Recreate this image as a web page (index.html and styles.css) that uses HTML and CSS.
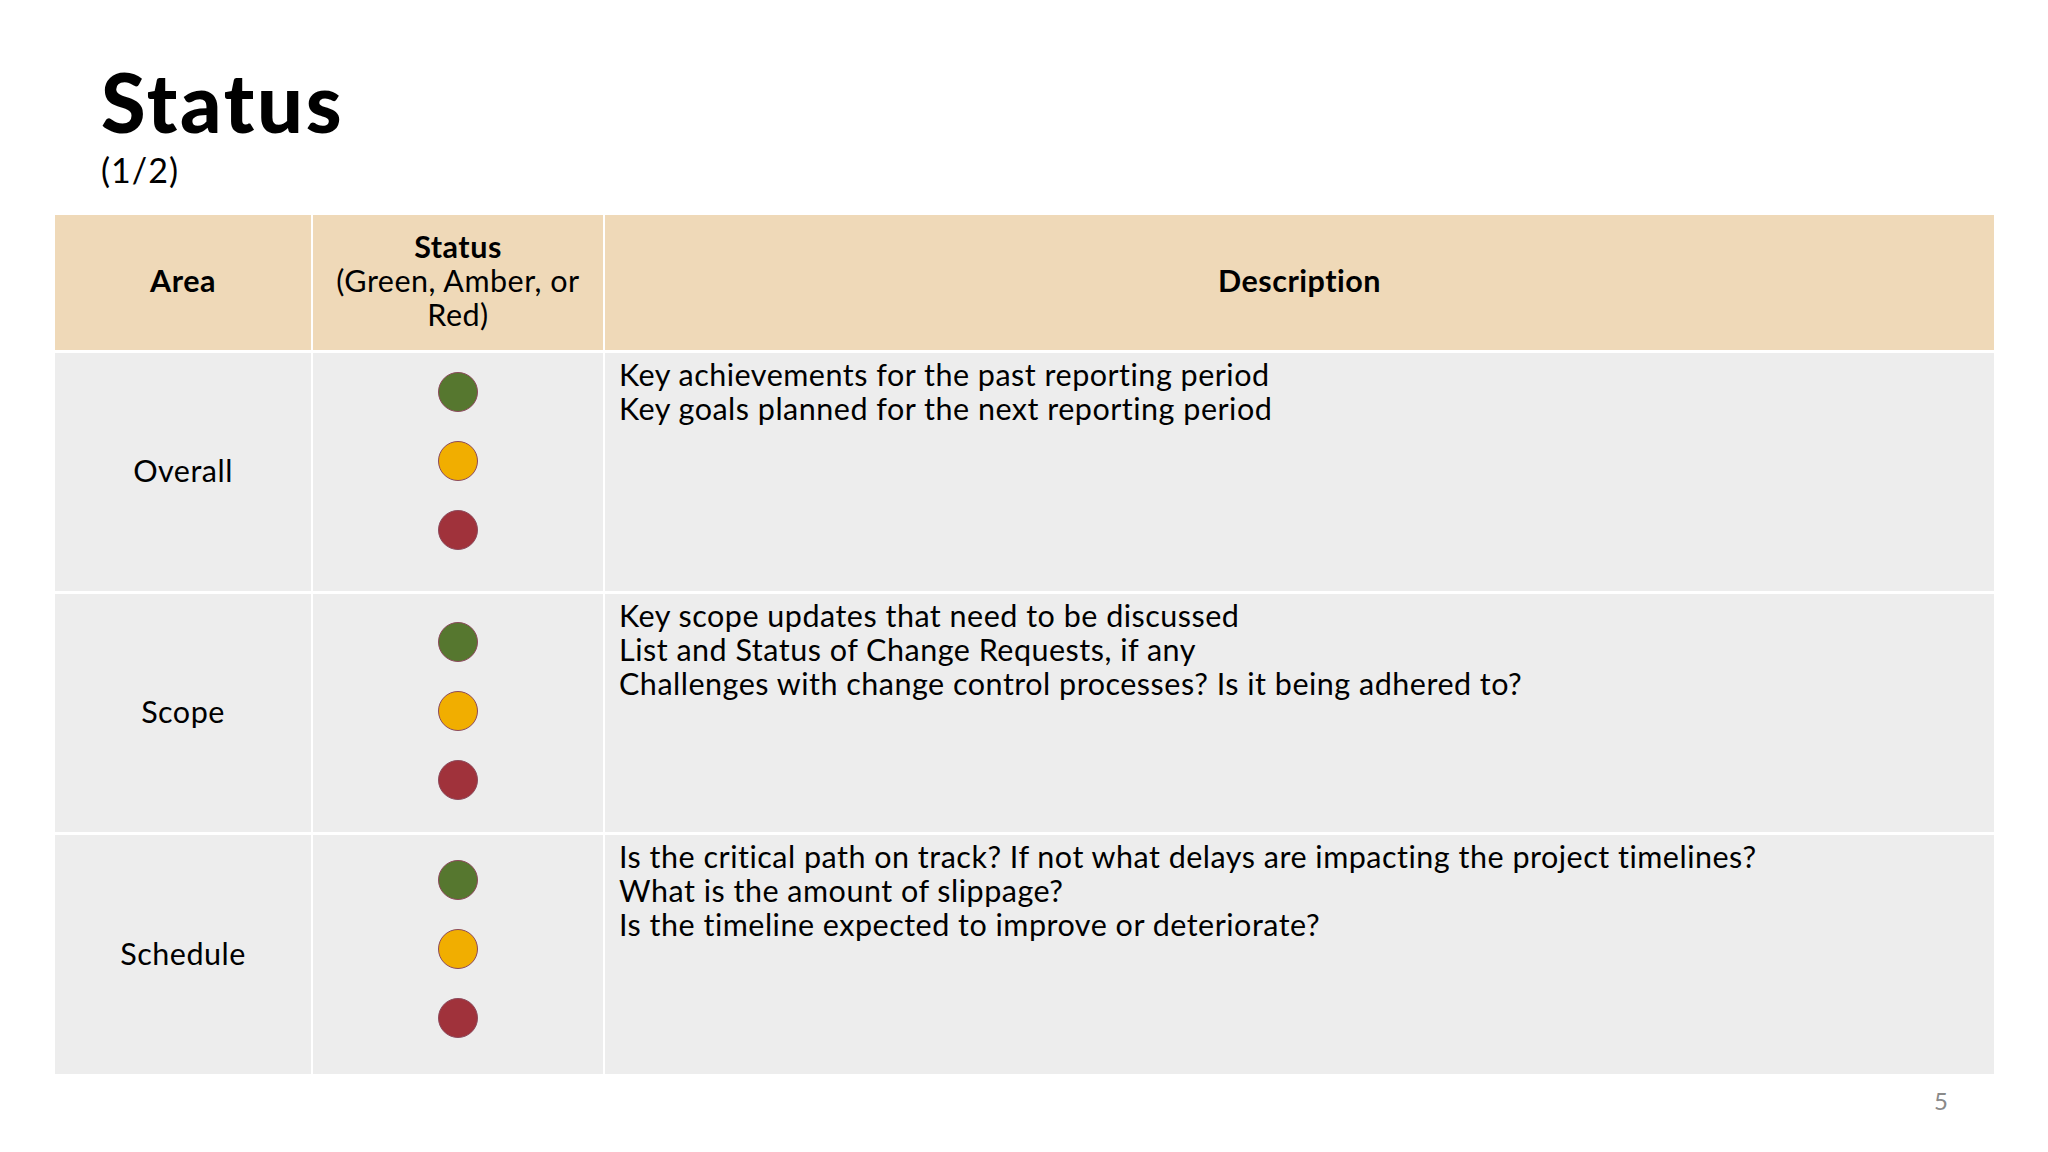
FILE: index.html
```html
<!DOCTYPE html>
<html lang="en">
<head>
<meta charset="utf-8">
<title>Status (1/2)</title>
<link rel="stylesheet" href="styles.css">
</head>
<body>
<main class="slide">
  <header class="slide-head">
    <h1 class="title">Status</h1>
    <p class="subtitle">(1/2)</p>
  </header>

  <section class="table">
    <div class="cell head">Area</div>
    <div class="cell head"><span class="strong">Status</span><span class="light">(Green, Amber, or<br>Red)</span></div>
    <div class="cell head">Description</div>

    <div class="cell area">Overall</div>
    <div class="cell lights"><span class="dot green"></span><span class="dot amber"></span><span class="dot red"></span></div>
    <div class="cell desc">Key achievements for the past reporting period<br>Key goals planned for the next reporting period</div>

    <div class="cell area">Scope</div>
    <div class="cell lights lower"><span class="dot green"></span><span class="dot amber"></span><span class="dot red"></span></div>
    <div class="cell desc">Key scope updates that need to be discussed<br>List and Status of Change Requests, if any<br>Challenges with change control processes? Is it being adhered to?</div>

    <div class="cell area">Schedule</div>
    <div class="cell lights lowest"><span class="dot green"></span><span class="dot amber"></span><span class="dot red"></span></div>
    <div class="cell desc">Is the critical path on track? If not what delays are impacting the project timelines?<br>What is the amount of slippage?<br>Is the timeline expected to improve or deteriorate?</div>
  </section>

  <footer class="page-num">5</footer>
</main>
</body>
</html>
```

FILE: styles.css
```css
* { box-sizing: border-box; }
html, body { margin: 0; padding: 0; background: #ffffff; }
body {
  font-family: Lato, "Open Sans", "Liberation Sans", sans-serif;
  color: #000;
  width: 2048px;
  height: 1152px;
  overflow: hidden;
}
.slide {
  position: relative;
  width: 2048px;
  height: 1152px;
  padding: 61px 54px 0 55px;
}
.slide-head { padding-left: 46px; }
.title {
  margin: 0;
  font-size: 81px;
  line-height: 81px;
  font-weight: 900;
  letter-spacing: 2.8px;
}
.subtitle {
  margin: 11px 0 0 0;
  font-size: 34px;
  line-height: 34px;
  font-weight: 400;
  letter-spacing: 1px;
}
.table {
  margin-top: 28px;
  display: grid;
  grid-template-columns: 256px 290px 1fr;
  grid-template-rows: 135px 238px 238px 239px;
  column-gap: 2px;
  row-gap: 3px;
  background: #ffffff;
}
.cell {
  background: #ededed;
  font-size: 30.5px;
  line-height: 34px;
  letter-spacing: 0.5px;
}
.head {
  background: #efd9b8;
  font-weight: 700;
  display: flex;
  flex-direction: column;
  align-items: center;
  justify-content: center;
  text-align: center;
  padding-bottom: 5px;
}
.head .light { font-weight: 400; }
.area {
  display: flex;
  align-items: center;
  justify-content: center;
  padding-bottom: 4px;
}
.lights {
  display: flex;
  flex-direction: column;
  align-items: center;
  gap: 29px;
  padding-top: 19px;
}
.lights.lower { padding-top: 28px; }
.lights.lowest { padding-top: 25px; }
.dot {
  width: 40px;
  height: 40px;
  border-radius: 50%;
  border: 1.5px solid #8c4a5c;
}
.green { background: #56772f; }
.amber { background: #f1ae00; }
.red { background: #a0323b; }
.desc {
  padding: 4px 16px 0 14px;
}
.page-num {
  position: absolute;
  left: 1934px;
  top: 1086px;
  font-size: 24px;
  color: #8a8a8a;
}
```
